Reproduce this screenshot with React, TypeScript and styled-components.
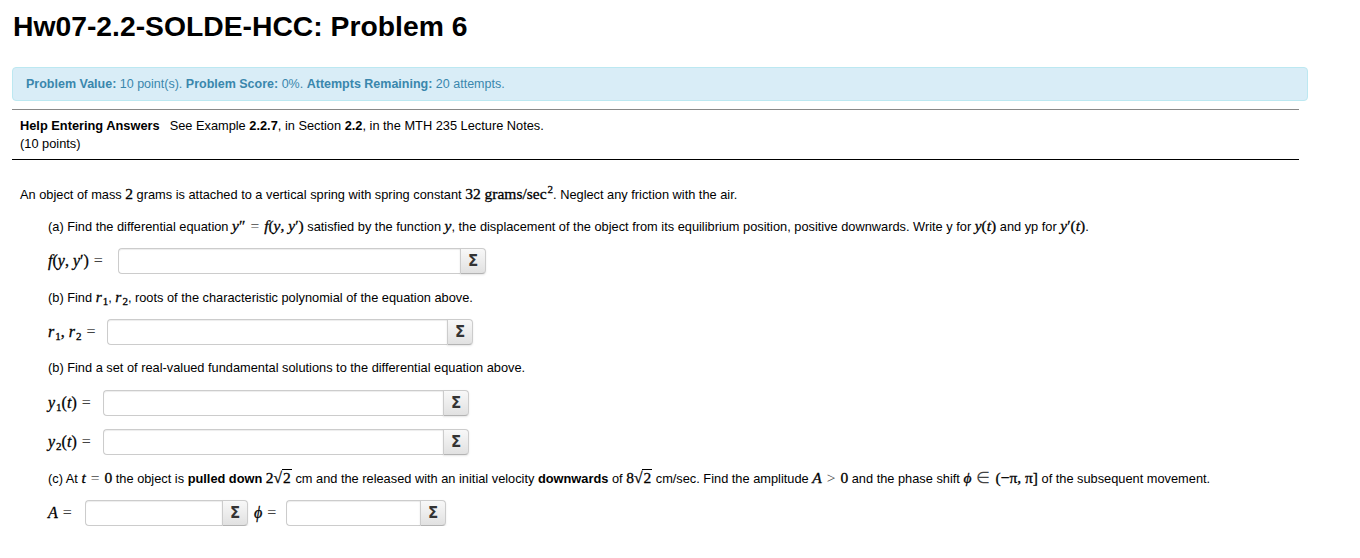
import React from 'react'
import styled, { createGlobalStyle } from 'styled-components'

const Global = createGlobalStyle`
  body {
    margin: 0;
    background: #fff;
    font-family: "Liberation Sans", Arial, sans-serif;
    font-size: 12.8px;
    color: #000;
  }
`

const Page = styled.div`
  width: 1296px;
  padding: 0 12px;
`

const Title = styled.h1`
  margin: 0;
  padding: 9px 0 0 1px;
  font-size: 28.3px;
  line-height: 34px;
  font-weight: bold;
  color: #000;
`

const Alert = styled.div`
  margin-top: 24px;
  padding: 7px 13px;
  line-height: 18px;
  font-size: 12.5px;
  background: #d9edf7;
  border: 1px solid #bce8f1;
  border-radius: 4px;
  color: #3a87ad;
`

const Header = styled.div`
  margin-top: 8px;
  border-top: 1px solid #888;
  padding: 7px 8px 6px;
  line-height: 18px;
  width: 1271px;
  border-bottom: 1px solid #000;
`

const HelpLink = styled.b`
  color: #000;
  margin-right: 10px;
`

const Body = styled.div`
  padding: 24px 8px 0;
  display: flex;
  flex-direction: column;
  gap: 13px;
`

const Line = styled.div<{ $indent?: boolean }>`
  line-height: 19px;
  height: 19px;
  padding-left: ${p => (p.$indent ? '28px' : '0')};
  white-space: nowrap;
`

const M = styled.span`
  font-family: "Liberation Serif", "Times New Roman", serif;
  font-size: 15.5px;
  color: #000;
  -webkit-text-stroke: 0.3px #000;
`

const V = styled.i`
  font-style: italic;
`

const Sub = styled.span`
  font-size: 11px;
  position: relative;
  top: 3px;
  margin-left: 1px;
`

const Sup = styled.span`
  font-size: 11px;
  position: relative;
  top: -6px;
  margin-left: 1px;
`

const Row = styled.div`
  display: flex;
  align-items: center;
  height: 26px;
  padding-left: 28px;
`

const Label = styled.span<{ $w: number; $lead?: number }>`
  box-sizing: border-box;
  width: ${p => p.$w}px;
  margin-left: ${p => p.$lead || 0}px;
  font-family: "Liberation Serif", "Times New Roman", serif;
  font-size: 16px;
  color: #000;
  -webkit-text-stroke: 0.3px #000;
  white-space: nowrap;
`

const Eq = styled.span`
  color: #444;
  -webkit-text-stroke: 0;
  margin: 0 5px;
`

const Field = styled.div`
  display: flex;
  height: 26px;
`

const Input = styled.input<{ $w: number }>`
  box-sizing: border-box;
  width: ${p => p.$w}px;
  height: 26px;
  border: 1px solid #ccc;
  border-right: none;
  border-radius: 4px 0 0 4px;
  box-shadow: inset 0 1px 1px rgba(0, 0, 0, 0.075);
  background: #fff;
  outline: none;
  padding: 4px 6px;
`

const Sigma = styled.button`
  box-sizing: border-box;
  width: 26px;
  height: 26px;
  padding: 0;
  border: 1px solid #ccc;
  border-bottom-color: #b3b3b3;
  border-radius: 0 4px 4px 0;
  background: linear-gradient(#f8f8f8, #e1e1e1);
  box-shadow: 0 1px 2px rgba(0, 0, 0, 0.1);
  font-family: "DejaVu Sans", sans-serif;
  font-size: 15px;
  font-weight: bold;
  color: #333;
`

const AnswerField: React.FC<{ w: number }> = ({ w }) => (
  <Field>
    <Input $w={w} />
    <Sigma>Σ</Sigma>
  </Field>
)

const Sqrt = styled.span`
  display: inline-block;
  border-top: 1px solid #000;
  line-height: 15px;
  padding: 0 1px;
`

export default function App() {
  return (
    <Page>
      <Global />
      <Title>Hw07-2.2-SOLDE-HCC: Problem 6</Title>
      <Alert>
        <b>Problem Value:</b> 10 point(s). <b>Problem Score:</b> 0%. <b>Attempts Remaining:</b> 20 attempts.
      </Alert>
      <Header>
        <HelpLink>Help Entering Answers</HelpLink>
        See Example <b>2.2.7</b>, in Section <b>2.2</b>, in the MTH 235 Lecture Notes.
        <br />
        (10 points)
      </Header>
      <Body>
        <Line>
          An object of mass <M>2</M> grams is attached to a vertical spring with spring constant{' '}
          <M>32 grams/sec<Sup>2</Sup></M>. Neglect any friction with the air.
        </Line>
        <Line $indent>
          (a) Find the differential equation <M><V>y</V>″<Eq>=</Eq><V>f</V>(<V>y</V>, <V>y</V>′)</M> satisfied by the
          function <M><V>y</V></M>, the displacement of the object from its equilibrium position, positive downwards.
          Write y for <M><V>y</V>(<V>t</V>)</M> and yp for <M><V>y</V>′(<V>t</V>)</M>.
        </Line>
        <Row>
          <Label $w={70}><V>f</V>(<V>y</V>, <V>y</V>′)<Eq>=</Eq></Label>
          <AnswerField w={342} />
        </Row>
        <Line $indent>
          (b) Find <M><V>r</V><Sub>1</Sub></M>, <M><V>r</V><Sub>2</Sub></M>, roots of the characteristic polynomial of
          the equation above.
        </Line>
        <Row>
          <Label $w={59}><V>r</V><Sub>1</Sub>, <V>r</V><Sub>2</Sub><Eq>=</Eq></Label>
          <AnswerField w={340} />
        </Row>
        <Line $indent>(b) Find a set of real-valued fundamental solutions to the differential equation above.</Line>
        <Row>
          <Label $w={55}><V>y</V><Sub>1</Sub>(<V>t</V>)<Eq>=</Eq></Label>
          <AnswerField w={340} />
        </Row>
        <Row>
          <Label $w={55}><V>y</V><Sub>2</Sub>(<V>t</V>)<Eq>=</Eq></Label>
          <AnswerField w={340} />
        </Row>
        <Line $indent>
          (c) At <M><V>t</V><Eq>=</Eq>0</M> the object is <b>pulled down</b> <M>2√<Sqrt>2</Sqrt></M> cm and the released
          with an initial velocity <b>downwards</b> of <M>8√<Sqrt>2</Sqrt></M> cm/sec. Find the amplitude{' '}
          <M><V>A</V><Eq>&gt;</Eq>0</M> and the phase shift <M><V>ϕ</V><Eq>∈</Eq>(−π, π]</M> of the subsequent movement.
        </Line>
        <Row>
          <Label $w={37}><V>A</V><Eq>=</Eq></Label>
          <AnswerField w={137} />
          <Label $w={32} $lead={6}><V>ϕ</V><Eq>=</Eq></Label>
          <AnswerField w={134} />
        </Row>
      </Body>
    </Page>
  )
}
